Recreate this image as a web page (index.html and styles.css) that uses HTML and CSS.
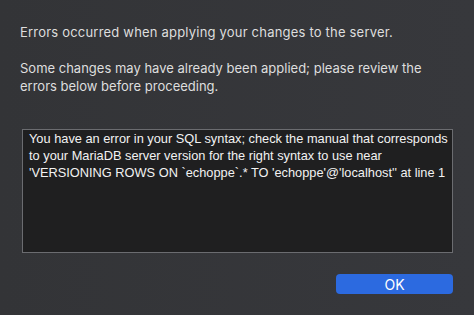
FILE: index.html
```html
<!DOCTYPE html>
<html lang="en">
<head>
    <meta charset="UTF-8">
    <title>Apply Changes Error</title>
    <link rel="stylesheet" href="styles.css">
</head>
<body>
    <div class="dialog">
        <p class="msg">Errors occurred when applying your changes to the server.</p>
        <p class="msg">Some changes may have already been applied; please review the<br>errors below before proceeding.</p>

        <div class="error-box">You have an error in your SQL syntax; check the manual that corresponds<br>to your MariaDB server version for the right syntax to use near<br>'VERSIONING ROWS ON `echoppe`.* TO 'echoppe'@'localhost'' at line 1</div>

        <div class="actions">
            <button class="ok-btn">OK</button>
        </div>
    </div>
</body>
</html>
```

FILE: styles.css
```css
/* Page */
body {
    margin: 0;
    width: 474px;
    height: 315px;
    overflow: hidden;
    background: linear-gradient(to right, #333437, #37383c);
    font-family: 'Inter', 'Liberation Sans', sans-serif;
    color: #dedede;
}

.dialog {
    padding: 23px 21px 0 20px;
    display: flex;
    flex-direction: column;
}

/* Messages */
.msg {
    margin: 0 0 18px 0;
    font-size: 13px;
    line-height: 18px;
    white-space: nowrap;
}

.msg:first-child {
    letter-spacing: 0.2px;
}

/* Error output */
.error-box {
    margin: 16px 0 0 2px;
    height: 124px;
    box-sizing: border-box;
    padding: 0 6px;
    background: #1f1f20;
    border: 1px solid #6b6c70;
    color: #f2f2f2;
    font-family: 'Liberation Sans', Arial, sans-serif;
    font-size: 12.8px;
    line-height: 17px;
    white-space: nowrap;
}

/* Buttons */
.actions {
    display: flex;
    justify-content: flex-end;
    margin-top: 21px;
}

.ok-btn {
    width: 117px;
    height: 20px;
    padding: 0;
    border: none;
    border-radius: 4px;
    background: #2c6ae0;
    color: #fff;
    font-family: 'Inter', sans-serif;
    font-size: 14px;
}
```
